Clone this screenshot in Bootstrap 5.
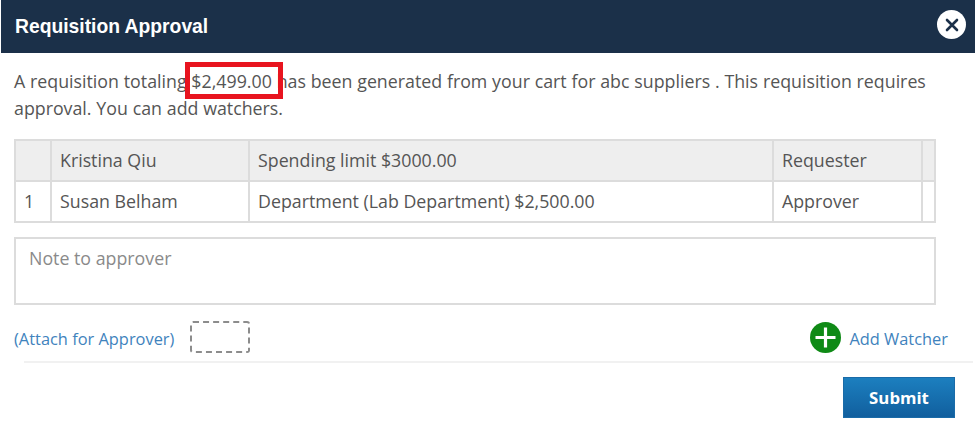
<!DOCTYPE html>
<html lang="en">
<head>
    <meta charset="UTF-8">
    <meta name="viewport" content="width=device-width, initial-scale=1.0">
    <link href="https://cdn.jsdelivr.net/npm/bootstrap@5.3.0/dist/css/bootstrap.min.css" rel="stylesheet">
    <title>Requisition Approval</title>
    <style>
        body {
            font-family: "Open Sans", "Liberation Sans", sans-serif;
            font-size: 17.8px;
            color: #555;
            background: #fff;
            overflow: hidden;
        }
        .modal-head {
            height: 53px;
            margin-left: 1px;
            padding: 0 9px 0 14px;
            background: #1b3049;
        }
        .modal-head h1 {
            margin: 0;
            font: bold 19.3px "Liberation Sans", sans-serif;
            color: #fff;
        }
        .close-btn {
            width: 29px;
            height: 29px;
            margin-bottom: 4px;
            padding: 0;
            border: 0;
            border-radius: 50%;
            background: #fff;
        }
        .close-btn svg { display: block; margin: auto; }
        .intro {
            margin: 0;
            padding: 15px 14px 0;
            line-height: 27px;
            word-spacing: .18px;
        }
        .price-wrap { position: relative; }
        .price-box {
            position: absolute;
            left: -6px;
            right: -11px;
            top: -7px;
            bottom: -6px;
            border: 5px solid #e8141f;
        }
        .body-wrap { padding: 0 39px 0 14px; }
        .req-table {
            width: 100%;
            margin: 17px 0 14px;
            table-layout: fixed;
            border-collapse: collapse;
            color: #555;
        }
        .req-table td {
            height: 41px;
            padding: 0 8px;
            border: 2px solid #dcdcdc;
            vertical-align: middle;
            color: #555;
        }
        .req-table tr.head-row td { background: #eee; }
        .note-box {
            display: block;
            width: 100%;
            height: 68px;
            padding: 6px 13px;
            border: 2px solid #dcdcdc;
            border-radius: 0;
            font-size: 17.8px;
            resize: none;
            outline: 0;
        }
        .note-box::placeholder { color: #8a8a8a; opacity: 1; }
        .attach-row {
            height: 56px;
            padding: 8px 27px 0 14px;
        }
        .blue-link {
            margin-top: 4px;
            color: #3f83bd;
            font-size: 16.4px;
            text-decoration: none;
        }
        .drop-zone {
            width: 60px;
            height: 32px;
            margin-left: 16px;
            border: 2px dashed #8c8c8c;
            border-radius: 3px;
        }
        .foot-line {
            height: 2px;
            margin: 0 2px 0 24px;
            background: #f1f1f1;
        }
        .foot-row { padding: 14px 20px 0 0; }
        .submit-btn {
            width: 112px;
            height: 41px;
            padding: 0;
            border: 1px solid #1a6ba8;
            border-radius: 0;
            background: linear-gradient(#1c7fbf, #115f9e);
            color: #fff;
            font-size: 16.8px;
            font-weight: 700;
        }
    </style>
</head>
<body>
    <div class="modal-head d-flex align-items-center justify-content-between">
        <h1>Requisition Approval</h1>
        <button type="button" class="close-btn" aria-label="Close">
            <svg width="16" height="16" viewBox="0 0 16 16"><path d="M3 3l10 10M13 3L3 13" stroke="#1b3049" stroke-width="2.6" stroke-linecap="round"/></svg>
        </button>
    </div>

    <p class="intro"><span>A requisition totaling</span> <span class="price-wrap">$2,499.00<span class="price-box"></span></span> <span>has been generated from your cart for abc suppliers . This requisition requires</span><br><span>approval. You can add watchers.</span></p>

    <div class="body-wrap">
        <table class="req-table">
            <colgroup>
                <col style="width: 36px">
                <col style="width: 198px">
                <col style="width: 524px">
                <col style="width: 149px">
                <col>
            </colgroup>
            <tr class="head-row">
                <td></td>
                <td>Kristina Qiu</td>
                <td>Spending limit $3000.00</td>
                <td>Requester</td>
                <td></td>
            </tr>
            <tr>
                <td>1</td>
                <td>Susan Belham</td>
                <td>Department (Lab Department) $2,500.00</td>
                <td>Approver</td>
                <td></td>
            </tr>
        </table>
        <textarea class="note-box" placeholder="Note to approver"></textarea>
    </div>

    <div class="attach-row d-flex align-items-center justify-content-between">
        <div class="d-flex align-items-center">
            <a href="#" class="blue-link">(Attach for Approver)</a>
            <div class="drop-zone"></div>
        </div>
        <div class="d-flex align-items-center gap-2">
            <svg width="31" height="31" viewBox="0 0 31 31"><circle cx="15.5" cy="15.5" r="15.5" fill="#0f8a16"/><path d="M15.5 5.5v20M5.5 15.5h20" stroke="#fff" stroke-width="3.2"/></svg>
            <a href="#" class="blue-link">Add Watcher</a>
        </div>
    </div>

    <div class="foot-line"></div>
    <div class="foot-row d-flex justify-content-end">
        <button type="button" class="submit-btn">Submit</button>
    </div>
    <script src="https://cdn.jsdelivr.net/npm/bootstrap@5.3.0/dist/js/bootstrap.bundle.min.js"></script>
</body>
</html>
